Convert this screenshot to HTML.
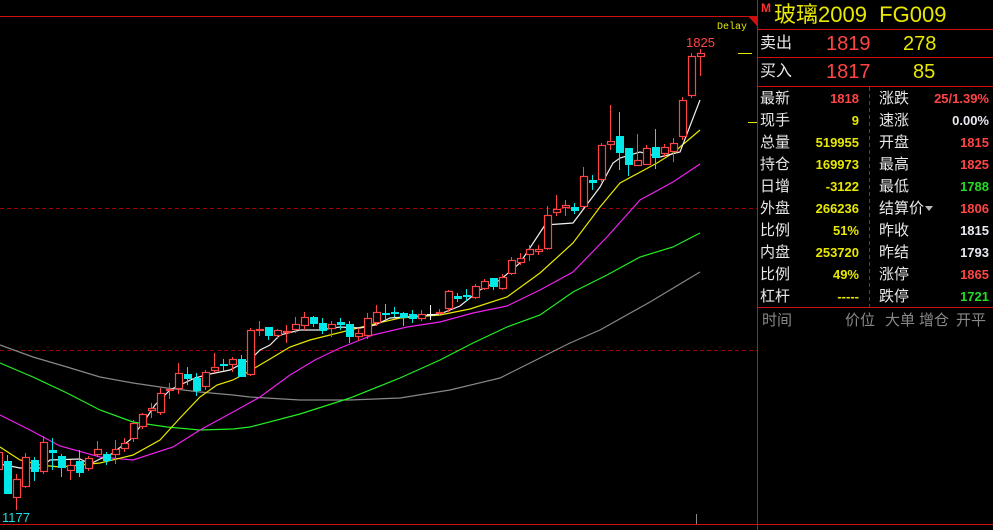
<!DOCTYPE html>
<html><head><meta charset="utf-8">
<style>
*{margin:0;padding:0;box-sizing:border-box}
body{width:993px;height:530px;background:#000;overflow:hidden;position:relative;font-family:"Liberation Sans","Noto Sans CJK SC",sans-serif;color:#fff}
.a{position:absolute;white-space:nowrap;line-height:1}
.lb{font-size:15px;color:#e8e8e8}
.v{font-size:13px;font-weight:bold;text-align:right}
.y{color:#e8e800}.r{color:#ff4444}.g{color:#22dd22}.w{color:#e8e8f0}
</style></head><body>
<svg class="a" style="left:0;top:0" width="993" height="530" id="s">
<line x1="0" y1="16.5" x2="757" y2="16.5" stroke="#d01010"/>
<line x1="0" y1="524.5" x2="993" y2="524.5" stroke="#d01010"/>
<line x1="757.5" y1="0" x2="757.5" y2="530" stroke="#d01010"/>
<line x1="0" y1="208.5" x2="757" y2="208.5" stroke="#a00000" stroke-dasharray="4,3"/>
<line x1="0" y1="350.5" x2="757" y2="350.5" stroke="#a00000" stroke-dasharray="4,3"/>
<polygon points="748,16 757,16 757,26" fill="#d01010"/>
<line x1="738" y1="53.5" x2="752" y2="53.5" stroke="#e8e800"/>
<line x1="748" y1="122.5" x2="757" y2="122.5" stroke="#e8e800"/>
<line x1="696.5" y1="514" x2="696.5" y2="524" stroke="#888"/>
<line x1="757" y1="29.5" x2="993" y2="29.5" stroke="#d01010"/>
<line x1="757" y1="57.5" x2="993" y2="57.5" stroke="#d01010"/>
<line x1="757" y1="86.5" x2="993" y2="86.5" stroke="#d01010"/>
<line x1="757" y1="307.5" x2="993" y2="307.5" stroke="#d01010"/>
<line x1="869.5" y1="87" x2="869.5" y2="307" stroke="#d01010" stroke-dasharray="4,3"/>
<polygon points="925,206 933,206 929,211" fill="#bbb"/>
<g fill="none" stroke-width="1.2">
<polyline stroke="#888" points="0,345 33,357 67,367 100,377 133,383 167,388 200,392 233,395 250,397 300,400 350,400 400,398 450,390 500,378 540,358 570,343 600,330 650,302 700,272"/>
<polyline stroke="#22ee22" points="0,363 33,377 67,393 100,410 133,422 167,427 200,430 233,429 250,427 300,414 350,398 400,378 440,360 473,343 507,327 540,315 573,292 607,275 640,257 673,247 700,233"/>
<polyline stroke="#ee22ee" points="0,415 30,430 60,446 100,457 133,460 173,447 200,430 233,412 260,397 290,375 315,360 340,348 373,335 407,327 440,322 473,313 507,306 540,290 573,272 607,237 640,200 673,182 700,164"/>
<polyline stroke="#e8e800" points="0,447 20,460 40,465 60,467 100,463 133,455 160,440 180,418 200,397 217,385 233,380 248,372 270,359 290,347 310,340 330,335 350,330 370,325 400,318 440,315 470,309 507,297 540,273 573,243 600,207 620,183 657,163 673,153 700,130"/>
<polyline stroke="#f0f0f0" points="0,464 20,468 40,468 50,460 80,459 90,464 100,459 110,455 130,440 145,420 155,405 170,390 180,385 195,378 210,374 230,370 245,362 250,360 260,350 270,345 280,335 300,330 320,330 340,327 360,328 375,325 390,318 420,316 440,314 460,306 480,290 500,280 520,263 545,225 573,223 600,187 613,163 620,158 640,152 660,157 680,152 700,100"/>
</g>
<g id="c"></g>
<text x="686" y="47" fill="#ff4444" font-size="13" font-family="Liberation Sans">1825</text>
<text x="2" y="522" fill="#22dddd" font-size="13" font-family="Liberation Sans">1177</text>
<text x="717" y="29" fill="#e8e800" font-size="10" font-family="Liberation Mono">Delay</text>
</svg>
<script>
var D=[[-2,452,470,448,472,'r'],[7,461,494,455,494,'c'],[16,479,498,474,510,'r'],[25,457,487,453,488,'r'],[34,460,472,457,481,'c'],[43,442,472,436,474,'r'],[52,450,453,438,470,'c'],[61,456,468,454,477,'c'],[70,465,471,460,480,'r'],[79,461,473,450,477,'c'],[88,458,469,456,471,'r'],[97,449,455,441,457,'r'],[106,454,461,452,465,'c'],[115,449,455,440,464,'r'],[124,443,449,438,452,'r'],[133,423,439,420,442,'r'],[142,414,427,413,429,'r'],[151,408,411,403,418,'r'],[160,393,413,388,415,'r'],[169,389,391,383,399,'r'],[178,373,389,363,394,'r'],[187,374,379,367,385,'c'],[196,378,391,373,396,'c'],[205,372,387,370,390,'r'],[214,367,371,353,373,'r'],[223,364,366,359,371,'c'],[232,359,365,357,372,'r'],[241,359,377,355,377,'c'],[250,330,375,328,376,'r'],[259,329,331,321,336,'r'],[268,327,336,327,340,'c'],[277,330,336,329,339,'r'],[286,331,333,325,343,'r'],[295,324,330,317,333,'r'],[304,317,326,312,330,'r'],[313,317,324,316,327,'c'],[322,323,331,318,334,'c'],[331,324,329,321,337,'r'],[340,322,325,318,330,'c'],[349,324,337,321,343,'c'],[358,333,337,328,341,'r'],[367,318,336,313,339,'r'],[376,312,323,305,326,'r'],[385,313,315,304,320,'c'],[394,312,314,307,317,'c'],[403,313,318,312,326,'c'],[412,314,319,310,323,'c'],[421,314,319,310,321,'r'],[430,314,315,305,320,'w'],[439,312,314,309,316,'r'],[448,291,309,290,312,'r'],[457,296,299,293,302,'c'],[466,295,297,289,301,'c'],[475,286,298,284,299,'r'],[484,281,289,279,290,'r'],[493,278,287,278,290,'c'],[502,277,289,274,290,'r'],[511,260,274,257,275,'r'],[520,258,263,253,265,'r'],[529,249,255,245,261,'r'],[538,249,252,245,255,'r'],[547,215,249,206,250,'r'],[556,209,213,195,216,'r'],[565,205,208,200,216,'r'],[574,207,211,203,214,'c'],[583,176,207,167,208,'r'],[592,180,183,175,190,'c'],[601,145,180,143,182,'r'],[610,141,145,105,150,'r'],[619,136,153,112,170,'c'],[628,148,165,148,176,'c'],[637,160,166,134,166,'r'],[646,148,165,145,165,'r'],[655,147,158,129,169,'c'],[664,147,154,144,157,'r'],[673,143,152,138,162,'r'],[682,100,137,97,140,'r'],[691,56,96,53,98,'r'],[700,53,57,49,76,'r']];
var h='';D.forEach(function(d){var x=d[0],t=d[1],b=d[2],c=d[5];
var col=c=='r'?'#ff4444':c=='c'?'#00e8e8':'#f0f0f0';
h+='<line x1="'+(x+.5)+'" y1="'+d[3]+'" x2="'+(x+.5)+'" y2="'+d[4]+'" stroke="'+col+'"/>';
if(c=='r')h+='<rect x="'+(x-2.5)+'" y="'+(t+.5)+'" width="7" height="'+Math.max(b-t-1,1)+'" fill="#000" stroke="'+col+'" stroke-width="1.2"/>';
else if(c=='c')h+='<rect x="'+(x-3)+'" y="'+t+'" width="8" height="'+Math.max(b-t,2)+'" fill="'+col+'"/>';
else h+='<rect x="'+(x-3)+'" y="'+t+'" width="8" height="1.5" fill="'+col+'"/>';});
document.getElementById('c').innerHTML=h;
</script>
<div class="a" style="left:761px;top:2px;font-size:12px;font-weight:bold;color:#ff3030">M</div>
<div class="a y" style="left:774px;top:4px;font-size:22px">玻璃2009&nbsp; FG009</div>
<div class="a lb" style="left:760px;top:36px;font-size:16px">卖出</div>
<div class="a r" style="left:826px;top:34px;font-size:20px">1819</div>
<div class="a y" style="left:903px;top:34px;font-size:20px">278</div>
<div class="a lb" style="left:760px;top:64px;font-size:16px">买入</div>
<div class="a r" style="left:826px;top:62px;font-size:20px">1817</div>
<div class="a y" style="left:913px;top:62px;font-size:20px">85</div>
<div id="rows"></div>
<script>
var L=[['最新','1818','r','涨跌','25/1.39%','r'],['现手','9','y','速涨','0.00%','w'],['总量','519955','y','开盘','1815','r'],['持仓','169973','y','最高','1825','r'],['日增','-3122','y','最低','1788','g'],['外盘','266236','y','结算价','1806','r'],['比例','51%','y','昨收','1815','w'],['内盘','253720','y','昨结','1793','w'],['比例','49%','y','涨停','1865','r'],['杠杆','-----','y','跌停','1721','g']];
var s='';L.forEach(function(r,i){var t=91+i*22;
s+='<div class="a lb" style="left:760px;top:'+t+'px">'+r[0]+'</div>';
s+='<div class="a v '+r[2]+'" style="right:134px;top:'+(t+1)+'px">'+r[1]+'</div>';
s+='<div class="a lb" style="left:879px;top:'+t+'px">'+r[3]+'</div>';
s+='<div class="a v '+r[5]+'" style="right:4px;top:'+(t+1)+'px">'+r[4]+'</div>';});
document.getElementById('rows').innerHTML=s;
</script>
<div class="a" style="left:762px;top:313px;font-size:15px;color:#888">时间</div>
<div class="a" style="left:845px;top:313px;font-size:15px;color:#888">价位</div>
<div class="a" style="left:885px;top:313px;font-size:15px;color:#888">大单</div>
<div class="a" style="left:919px;top:313px;font-size:15px;color:#888">增仓</div>
<div class="a" style="left:956px;top:313px;font-size:15px;color:#888">开平</div>
</body></html>
